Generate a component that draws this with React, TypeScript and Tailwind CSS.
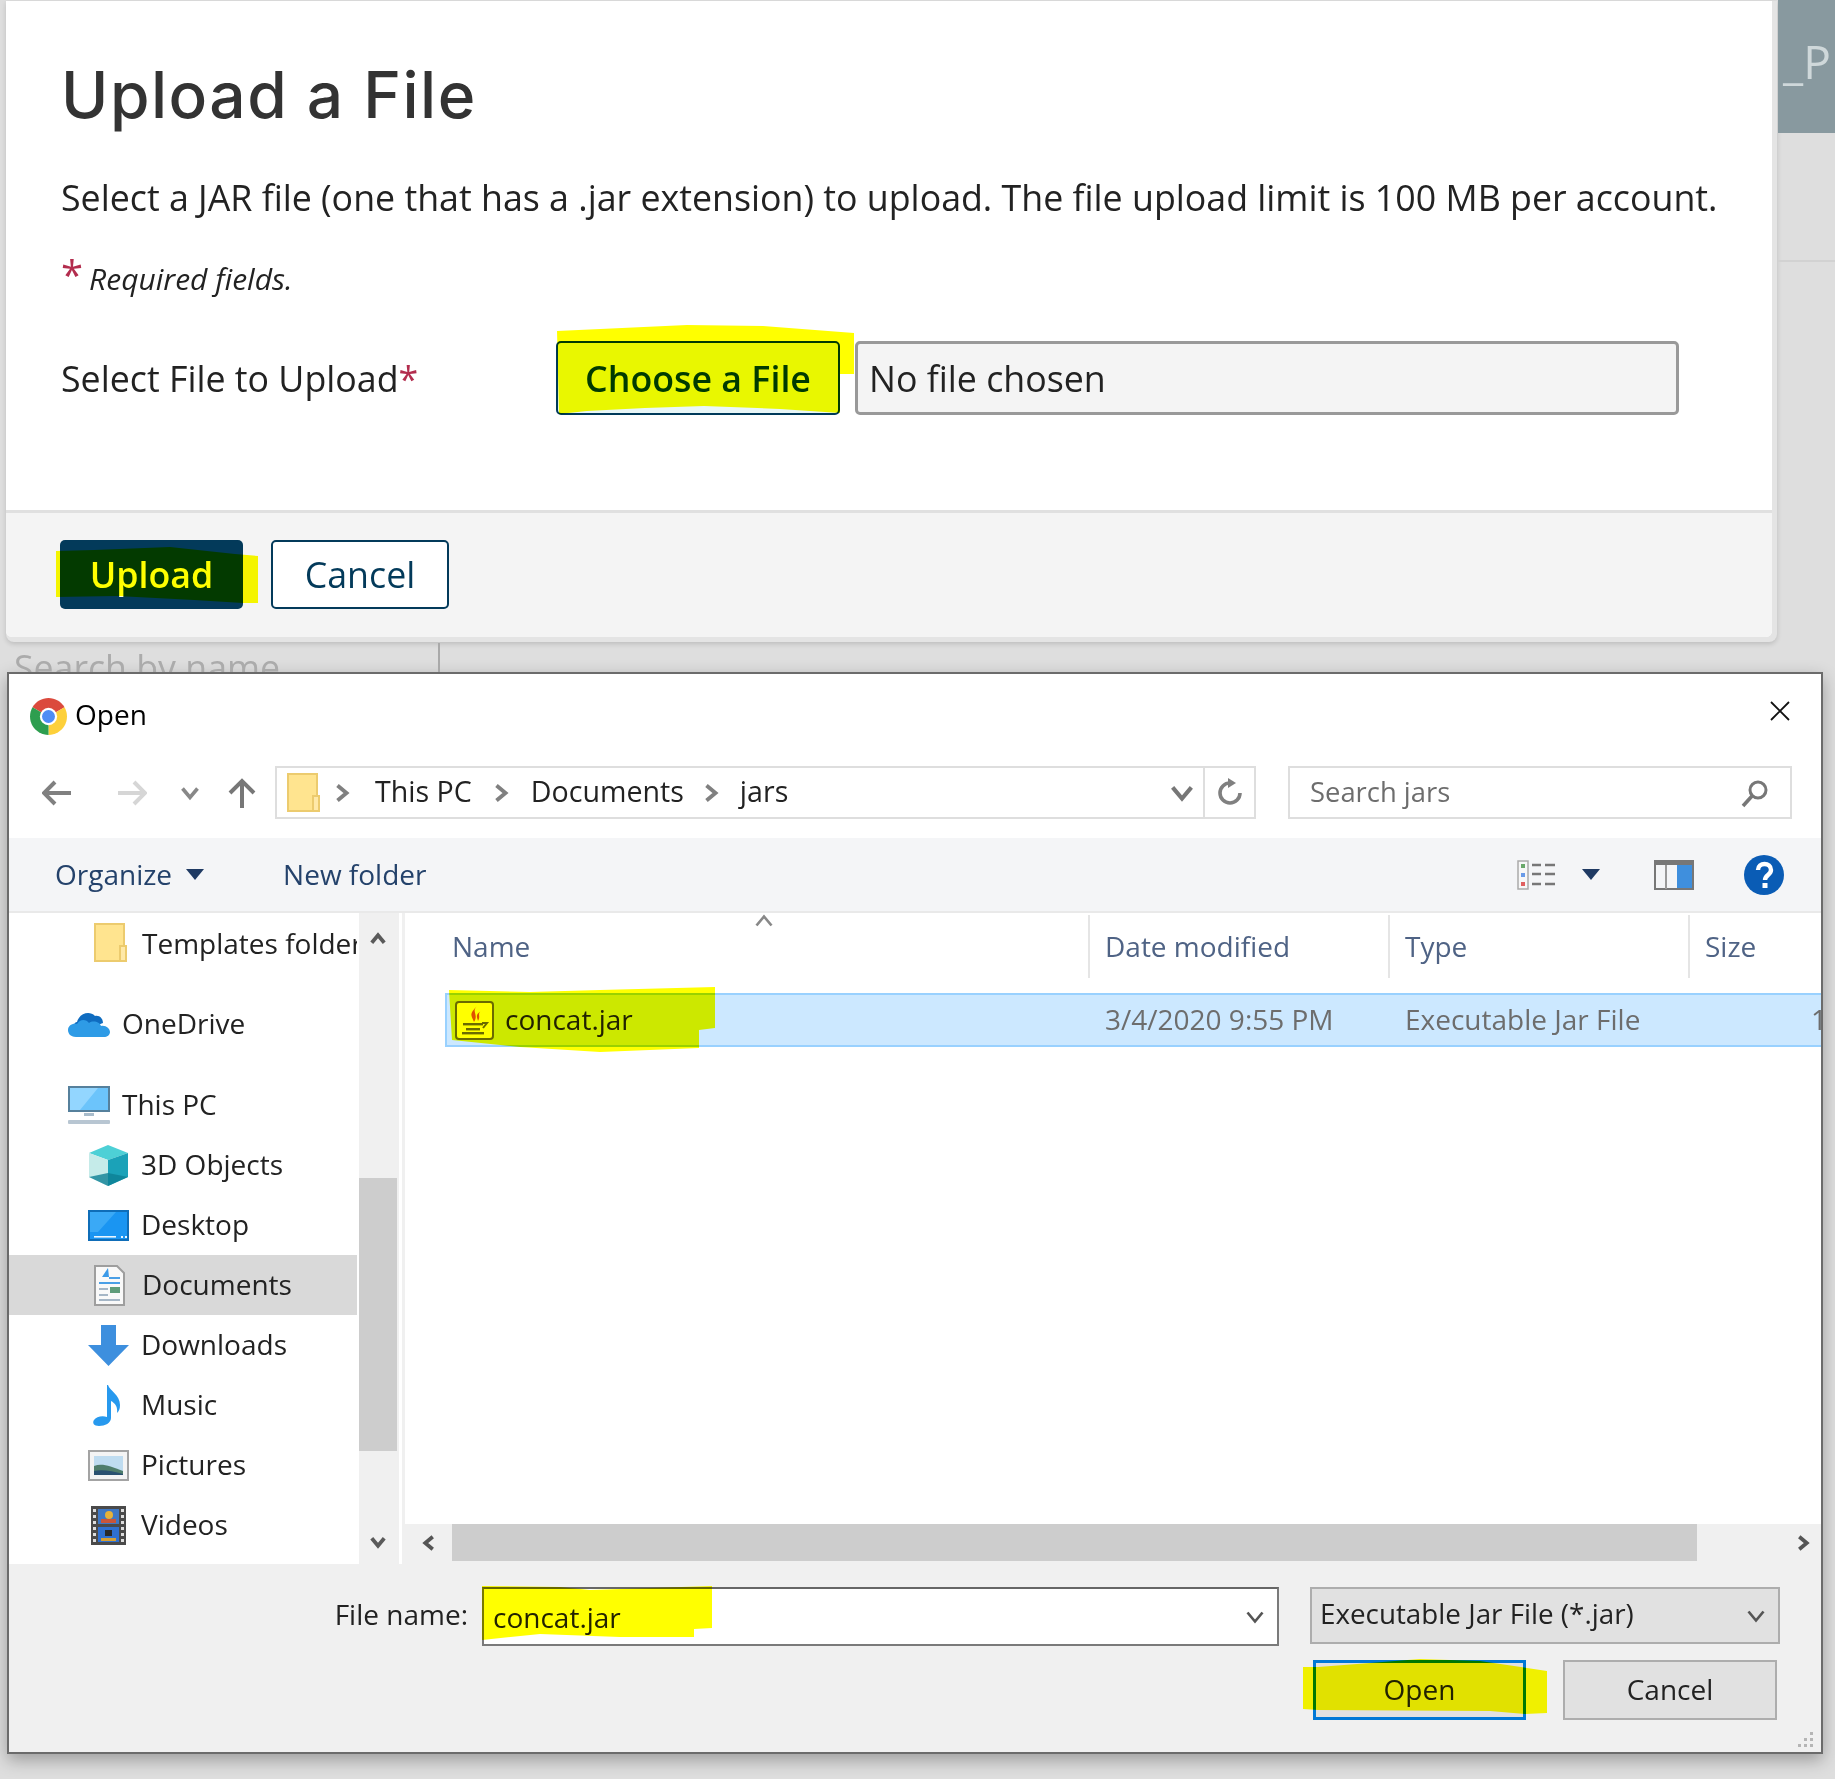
import React from 'react';

const openSans = "font-['Open_Sans',sans-serif]";

function Chev({ dir, size = 16, color = '#555', sw = 2.4 }: { dir: 'up' | 'down' | 'left' | 'right'; size?: number; color?: string; sw?: number }) {
    const pts = { up: '3,11 8,5 13,11', down: '3,5 8,11 13,5', left: '11,3 5,8 11,13', right: '5,3 11,8 5,13' }[dir];
    return (
        <svg width={size} height={size} viewBox="0 0 16 16" className="shrink-0">
            <polyline points={pts} fill="none" stroke={color} strokeWidth={sw} />
        </svg>
    );
}

function Tri({ color = '#1f3a63' }: { color?: string }) {
    return (
        <svg width="18" height="11" viewBox="0 0 18 11" className="shrink-0">
            <polygon points="0,0 18,0 9,11" fill={color} />
        </svg>
    );
}

function FolderIcon() {
    return (
        <svg width="33" height="40" viewBox="0 0 33 40" className="shrink-0">
            <rect x="1" y="1" width="29" height="37" fill="#ffe48f" stroke="#eccb6e" strokeWidth="2" />
            <rect x="26" y="23" width="6" height="15" fill="#ffe9a8" stroke="#eccb6e" strokeWidth="2" />
        </svg>
    );
}

function ChromeIcon() {
    return (
        <svg width="37" height="37" viewBox="0 0 24 24" className="shrink-0">
            <path d="M12 12L22.39 6A12 12 0 0 0 1.61 6Z" fill="#db4a3d" />
            <path d="M12 12L12 24A12 12 0 0 0 22.39 6Z" fill="#fdd03a" />
            <path d="M12 12L1.61 6A12 12 0 0 0 12 24Z" fill="#2d9e4f" />
            <circle cx="12" cy="12" r="5.6" fill="#fff" />
            <circle cx="12" cy="12" r="4.2" fill="#4f8df5" />
        </svg>
    );
}

function OneDriveIcon() {
    return (
        <svg width="42" height="27" viewBox="0 0 42 27" className="shrink-0">
            <path d="M9 12C11 4 21 0 27 6C31 5 35 8 35 13L16 20L6 17C5 15 7 12 9 12Z" fill="#0f6cc0" />
            <path d="M8 27C2 27 0 23 0 20C0 16 4 13 9 14C12 9 18 9 21 13C25 10 32 12 33 16C38 15 42 19 42 22C42 25 39 27 36 27Z" fill="#2e9be6" />
        </svg>
    );
}

function MonitorIcon() {
    return (
        <svg width="42" height="39" viewBox="0 0 42 39" className="shrink-0">
            <rect x="1" y="1" width="40" height="24" fill="#6cc4fb" stroke="#56809c" strokeWidth="2" />
            <polygon points="2,2 30,2 12,24 2,24" fill="#93d6ff" />
            <rect x="16" y="27" width="10" height="3" fill="#a9bccb" />
            <rect x="0" y="34" width="42" height="4" rx="1" fill="#b8c6d2" />
        </svg>
    );
}

function CubeIcon() {
    return (
        <svg width="41" height="41" viewBox="0 0 41 41" className="shrink-0">
            <polygon points="20,0 40,8 20,15 1,8" fill="#4dd0d6" />
            <polygon points="1,8 20,15 20,41 1,32" fill="#c5ebe9" />
            <polygon points="40,8 20,15 20,41 40,32" fill="#1ba2b8" />
            <polygon points="20,28 40,32 20,41 1,32" fill="#0d7f93" opacity="0.8" />
        </svg>
    );
}

function DesktopIcon() {
    return (
        <svg width="41" height="31" viewBox="0 0 41 31" className="shrink-0">
            <rect x="1" y="1" width="39" height="29" fill="#1a95f2" stroke="#0f6db8" strokeWidth="2" />
            <polygon points="2,2 28,2 10,22 2,22" fill="#3aa9f6" />
            <rect x="6" y="26" width="22" height="1.6" fill="#e8f5ff" />
            <rect x="33" y="26" width="2" height="2" fill="#e8f5ff" />
            <rect x="37" y="26" width="2" height="2" fill="#e8f5ff" />
        </svg>
    );
}

function DocumentIcon() {
    return (
        <svg width="31" height="41" viewBox="0 0 31 41" className="shrink-0">
            <path d="M1 1H23L30 8V40H1Z" fill="#f9f9f9" stroke="#9e9e9e" strokeWidth="2" />
            <path d="M8 12L14 3L15 12Z" fill="#3c9ae8" />
            <rect x="15" y="12" width="11" height="2" fill="#4a9fe6" />
            <rect x="5" y="17" width="21" height="2" fill="#4a9fe6" />
            <rect x="5" y="23" width="9" height="2" fill="#a5b6c6" />
            <rect x="16" y="22" width="10" height="6" fill="#5f9c7a" />
            <rect x="5" y="29" width="9" height="2" fill="#a5b6c6" />
            <rect x="5" y="34" width="21" height="2" fill="#a5b6c6" />
        </svg>
    );
}

function DownloadIcon() {
    return (
        <svg width="41" height="41" viewBox="0 0 41 41" className="shrink-0">
            <polygon points="13,0 28,0 28,20 41,20 20.5,41 0,20 13,20" fill="#3d8fde" />
        </svg>
    );
}

function MusicIcon() {
    return (
        <svg width="30" height="41" viewBox="0 0 30 41" className="shrink-0">
            <path d="M16 0C18 6 28 10 28 20C28 24 27 26 25 28C26 22 23 18 19 16V33C19 38 13 41 7 41C2 41 0 38 2 35C4 32 10 30 15 32V0Z" fill="#2799ee" />
        </svg>
    );
}

function PicturesIcon() {
    return (
        <svg width="41" height="31" viewBox="0 0 41 31" className="shrink-0">
            <rect x="1" y="1" width="39" height="29" fill="#f4f4f4" stroke="#a3a3a3" strokeWidth="2" />
            <rect x="6" y="6" width="29" height="19" fill="#bfdcf0" />
            <path d="M6 16C14 13 22 16 35 21V25H6Z" fill="#4f7d6b" />
            <path d="M6 21C14 19 24 21 35 24V25H6Z" fill="#2a5170" />
        </svg>
    );
}

function VideosIcon() {
    return (
        <svg width="35" height="39" viewBox="0 0 35 39" className="shrink-0">
            <rect x="0" y="0" width="35" height="39" fill="#4a4a4a" />
            <rect x="7" y="3" width="21" height="15" fill="#3f78c4" />
            <rect x="7" y="21" width="21" height="15" fill="#2f70d0" />
            <circle cx="18" cy="9" r="4" fill="#e6b23a" />
            <rect x="10" y="13" width="15" height="4" fill="#c8553a" />
            <rect x="14" y="24" width="7" height="6" fill="#2a2a2a" />
            <rect x="10" y="32" width="15" height="3" fill="#d6a035" />
            {[3, 9, 15, 21, 27, 33].map(y => (
                <g key={y}>
                    <rect x="2" y={y} width="3" height="3" fill="#ddd" />
                    <rect x="30" y={y} width="3" height="3" fill="#ddd" />
                </g>
            ))}
        </svg>
    );
}

function JarIcon() {
    return (
        <svg width="39" height="39" viewBox="0 0 39 39" className="shrink-0">
            <rect x="1" y="1" width="37" height="37" rx="3" fill="#fff" stroke="#6a6a40" strokeWidth="2" />
            <path d="M22 5C16 11 24 13 19 21C17 15 13 14 22 5Z" fill="#e0502a" />
            <path d="M26 10C22 13 26 15 23 20C22 16 20 14 26 10Z" fill="#e0502a" />
            <rect x="8" y="22" width="20" height="2.4" fill="#6a6a40" />
            <rect x="11" y="27" width="14" height="2.4" fill="#6a6a40" />
            <rect x="7" y="31" width="22" height="2.4" fill="#6a6a40" />
            <path d="M27 22H32L28 27" fill="none" stroke="#6a6a40" strokeWidth="2" />
        </svg>
    );
}

const navItems = [
    { label: 'This PC', icon: <MonitorIcon />, pl: 'pl-[59px]', gap: 'gap-[12px]' },
    { label: '3D Objects', icon: <CubeIcon />, pl: 'pl-[79px]', gap: 'gap-[12px]' },
    { label: 'Desktop', icon: <DesktopIcon />, pl: 'pl-[79px]', gap: 'gap-[12px]' },
    { label: 'Documents', icon: <DocumentIcon />, pl: 'pl-[85px]', gap: 'gap-[17px]', active: true },
    { label: 'Downloads', icon: <DownloadIcon />, pl: 'pl-[79px]', gap: 'gap-[12px]' },
    { label: 'Music', icon: <MusicIcon />, pl: 'pl-[83px]', gap: 'gap-[19px]' },
    { label: 'Pictures', icon: <PicturesIcon />, pl: 'pl-[79px]', gap: 'gap-[12px]' },
    { label: 'Videos', icon: <VideosIcon />, pl: 'pl-[82px]', gap: 'gap-[15px]' },
];

function UploadModal() {
    return (
        <div className="ml-[6px] mt-px h-[641px] w-[1771px] shrink-0 rounded-b-lg bg-[#e4e4e4] pr-[5px] pb-[5px] shadow-[0_2px_5px_rgba(0,0,0,0.15)]">
            <div className="flex h-full flex-col overflow-hidden rounded-b-md bg-white">
                <div className="flex-1 pl-[55px] pt-[54px]">
                    <h1 className="font-['Inter',sans-serif] text-[64px] font-medium leading-[80px] tracking-[1.5px] text-[#333]">Upload a File</h1>
                    <p className="mt-[37px] whitespace-nowrap text-[35.75px] leading-[50px] text-[#222]">
                        Select a JAR file (one that has a .jar extension) to upload. The file upload limit is 100 MB per account.
                    </p>
                    <p className="mt-[28px] flex h-[50px] items-baseline text-[#222]">
                        <span className="mr-[6px] text-[40px] leading-[50px] text-[#b32d4e]">*</span>
                        <em className="text-[30px] leading-[50px]">Required fields.</em>
                    </p>
                    <div className="mt-[41px] flex items-center">
                        <div className="w-[495px] text-[35.75px] leading-[50px] text-[#222]">
                            Select File to Upload<span className="text-[#b32d4e]">*</span>
                        </div>
                        <button className="h-[74px] w-[284px] rounded-[5px] border-2 border-[#003a5a] bg-[#e9f7f8] pt-[2px] text-[35.75px] font-semibold text-[#003a5a]">Choose a File</button>
                        <div className="ml-[15px] flex h-[74px] w-[824px] items-center rounded-[5px] border-[3px] border-[#999] bg-[#f4f4f4] pl-[11px] pt-[2px] text-[35.75px] text-[#222]">No file chosen</div>
                    </div>
                </div>
                <div className="flex h-[127px] shrink-0 gap-[28px] border-t-[3px] border-[#e0e0e0] bg-[#f4f4f4] pl-[54px] pt-[27px]">
                    <button className="h-[69px] w-[183px] rounded-[5px] bg-[#033a5a] text-[35.75px] font-semibold text-white">Upload</button>
                    <button className="h-[69px] w-[178px] rounded-[5px] border-2 border-[#033a5a] bg-white text-[35.75px] font-medium text-[#033a5a]">Cancel</button>
                </div>
            </div>
        </div>
    );
}

function OpenDialog() {
    return (
        <div className="ml-[7px] h-[1082px] w-[1816px] shrink-0 flex flex-col border-2 border-[#6b6b6b] bg-white text-[28px] text-[#222] shadow-[0_6px_16px_rgba(0,0,0,0.3)]">
            {/* title bar */}
            <div className="flex h-[92px] shrink-0 items-start justify-between pl-[21px] pr-[31px] pt-[19px]">
                <div className="flex items-center gap-[8px] text-black">
                    <ChromeIcon />
                    <span className="pb-[5px]">Open</span>
                </div>
                <svg width="20" height="20" viewBox="0 0 20 20" className="mt-[8px]">
                    <path d="M1 1L19 19M19 1L1 19" stroke="#111" strokeWidth="1.8" />
                </svg>
            </div>

            {/* nav row */}
            <div className="flex h-[53px] shrink-0 items-center pl-[33px]">
                <svg width="30" height="26" viewBox="0 0 30 26" className="shrink-0">
                    <path d="M29 13H3M13 2L2 13L13 24" fill="none" stroke="#808080" strokeWidth="4" />
                </svg>
                <svg width="30" height="26" viewBox="0 0 30 26" className="ml-[45px] shrink-0">
                    <path d="M1 13H27M17 2L28 13L17 24" fill="none" stroke="#d6d6d6" strokeWidth="4" />
                </svg>
                <div className="ml-[31px]"><Chev dir="down" size={24} color="#888" sw={2.4} /></div>
                <svg width="30" height="30" viewBox="0 0 30 30" className="ml-[25px] shrink-0">
                    <path d="M15 30V3M3 15L15 3L27 15" fill="none" stroke="#777" strokeWidth="4" />
                </svg>
                <div className="ml-[18px] flex h-[53px] w-[981px] items-center border-2 border-[#dedede] pl-[10px]">
                    <FolderIcon />
                    <div className="ml-[10px]"><Chev dir="right" size={24} color="#808080" sw={2.6} /></div>
                    <span className="ml-[21px] pb-[2px] text-[28.6px]">This PC</span>
                    <div className="ml-[17px]"><Chev dir="right" size={24} color="#808080" sw={2.6} /></div>
                    <span className="ml-[18px] pb-[2px] text-[28.6px]">Documents</span>
                    <div className="ml-[15px]"><Chev dir="right" size={24} color="#808080" sw={2.6} /></div>
                    <span className="ml-[17px] pb-[2px] text-[28.6px]">jars</span>
                    <div className="ml-auto mr-[6px]"><Chev dir="down" size={30} color="#777" sw={2.2} /></div>
                    <div className="flex h-full w-[51px] items-center justify-center border-l-2 border-[#dedede]">
                        <svg width="26" height="30" viewBox="0 0 26 30">
                            <path d="M15 5H13A10 10 0 1 0 23 15" fill="none" stroke="#808080" strokeWidth="3.6" />
                            <path d="M11 0L19 5L11 10Z" fill="#808080" />
                        </svg>
                    </div>
                </div>
                <div className="ml-[32px] flex h-[53px] w-[504px] items-center justify-between border-2 border-[#dedede] pl-[20px] pr-[20px] text-[#6d6d6d]">
                    <span className="pb-[2px] text-[27.4px]">Search jars</span>
                    <svg width="30" height="30" viewBox="0 0 30 30">
                        <circle cx="18" cy="12" r="8" fill="none" stroke="#777" strokeWidth="3" />
                        <path d="M12 18L3 28" stroke="#777" strokeWidth="3.6" />
                    </svg>
                </div>
            </div>

            {/* toolbar */}
            <div className="mt-[19px] flex h-[75px] shrink-0 items-center border-b-2 border-[#e9e9e9] bg-[#f4f5f7] pl-[46px] text-[#24426b]">
                <span className="pb-[2px]">Organize</span>
                <div className="ml-[14px]"><Tri /></div>
                <span className="ml-[79px] pb-[2px]">New folder</span>
                <svg width="40" height="30" viewBox="0 0 40 30" className="ml-auto shrink-0">
                    <rect x="1" y="1" width="10" height="28" fill="#f7f7f7" stroke="#aaa" strokeWidth="1.5" />
                    <rect x="4" y="4" width="4" height="4" fill="#6aa86a" />
                    <rect x="4" y="13" width="4" height="4" fill="#6a9be8" />
                    <rect x="4" y="22" width="4" height="4" fill="#e06060" />
                    {[5, 14, 24].map(y => (
                        <path key={y} d={`M15 ${y}H24M28 ${y}H38`} stroke="#777" strokeWidth="2.4" />
                    ))}
                </svg>
                <div className="ml-[25px]"><Tri /></div>
                <svg width="40" height="30" viewBox="0 0 40 30" className="ml-[54px] shrink-0">
                    <rect x="1" y="1" width="38" height="28" fill="#f4f5f7" stroke="#777" strokeWidth="2" />
                    <rect x="1" y="1" width="38" height="4" fill="#777" />
                    <rect x="11" y="5" width="2" height="24" fill="#999" />
                    <rect x="23" y="5" width="15" height="23" fill="#3f8fdd" />
                </svg>
                <svg width="40" height="40" viewBox="0 0 40 40" className="ml-[50px] mr-[37px] shrink-0">
                    <circle cx="20" cy="20" r="20" fill="#0a5cb5" />
                    <path d="M14 15C14 7 27 7 27 15C27 20 21 20 21 25" fill="none" stroke="#fff" strokeWidth="4.4" />
                    <rect x="18.5" y="28" width="5" height="5" fill="#fff" />
                </svg>
            </div>

            {/* body */}
            <div className="flex min-h-0 flex-1">
                <div className="w-[348px] shrink-0 overflow-hidden">
                    <div className="flex h-[60px] items-center gap-[15px] whitespace-nowrap pl-[85px]">
                        <FolderIcon />
                        <span>Templates folder</span>
                    </div>
                    <div className="mt-[20px] flex h-[60px] items-center gap-[12px] pl-[59px]">
                        <OneDriveIcon />
                        <span>OneDrive</span>
                    </div>
                    <div className="mt-[22px]">
                        {navItems.map(item => (
                            <div
                                key={item.label}
                                className={`flex h-[60px] items-center ${item.pl} ${item.gap} ${item.active ? 'bg-[#d9d9d9]' : ''}`}
                            >
                                {item.icon}
                                <span className="pb-[3px]">{item.label}</span>
                            </div>
                        ))}
                    </div>
                </div>
                <div className="ml-[2px] flex w-[40px] shrink-0 flex-col bg-[#f0f0f0]">
                    <div className="flex h-[265px] justify-center pr-[2px] pt-[16px]"><Chev dir="up" size={20} color="#5a5a5a" sw={3} /></div>
                    <div className="h-[273px] w-[38px] bg-[#cdcdcd]" />
                    <div className="flex flex-1 items-end justify-center pb-[12px] pr-[2px]"><Chev dir="down" size={20} color="#5a5a5a" sw={3} /></div>
                </div>
                <div className="ml-[3px] w-[3px] shrink-0 bg-[#f0f0f0]" />

                <div className="flex min-w-0 flex-1 flex-col overflow-hidden">
                    <div className="relative flex h-[67px] shrink-0 text-[#4f6385]">
                        <div className="flex w-[683px] items-center pb-[2px] pl-[47px]">Name</div>
                        <div className="my-[2px] flex w-[300px] items-center border-l-2 border-[#e5e5e5] pb-[2px] pl-[15px]">Date modified</div>
                        <div className="my-[2px] flex w-[300px] items-center border-l-2 border-[#e5e5e5] pb-[2px] pl-[15px]">Type</div>
                        <div className="my-[2px] flex flex-1 items-center border-l-2 border-[#e5e5e5] pb-[2px] pl-[15px]">Size</div>
                        <div className="absolute left-[347px] top-[-4px]"><Chev dir="up" size={24} color="#888" sw={1.8} /></div>
                    </div>
                    <div className="ml-[40px] mt-[13px] flex h-[54px] shrink-0 items-center overflow-hidden border-y-2 border-l-2 border-[#99d1ff] bg-[#cce8ff] text-[#6d6d6d]">
                        <div className="flex w-[658px] shrink-0 items-center gap-[11px] pl-[8px] text-[#222]">
                            <JarIcon />
                            <span className="pb-[3px]">concat.jar</span>
                        </div>
                        <div className="w-[300px] shrink-0 pb-[3px]">3/4/2020 9:55 PM</div>
                        <div className="w-[406px] shrink-0 pb-[3px]">Executable Jar File</div>
                        <div className="shrink-0 pb-[3px]">1</div>
                    </div>
                    <div className="flex-1" />
                    <div className="flex h-[40px] shrink-0 items-start bg-[#f0f0f0]">
                        <div className="flex h-[37px] w-[47px] items-center justify-center"><Chev dir="left" size={20} color="#555" sw={3} /></div>
                        <div className="h-[37px] w-[1245px] bg-[#cdcdcd]" />
                        <div className="flex h-[37px] flex-1 items-center justify-end pr-[8px]"><Chev dir="right" size={20} color="#555" sw={3} /></div>
                    </div>
                </div>
            </div>

            {/* footer */}
            <div className="relative h-[188px] shrink-0 bg-[#f0f0f0] pt-[23px]">
                <div className="flex items-start">
                    <div className="flex h-[57px] w-[459px] items-center justify-end pb-[3px]">File name:</div>
                    <div className="ml-[14px] flex h-[59px] w-[797px] items-center justify-between border-2 border-[#7a7a7a] border-t-[#666] bg-white pl-[9px] pr-[10px]">
                        <span>concat.jar</span>
                        <Chev dir="down" size={24} color="#555" sw={1.8} />
                    </div>
                    <div className="ml-[31px] flex h-[57px] w-[470px] items-center justify-between border-2 border-[#adadad] bg-[#e1e1e1] pl-[8px] pr-[10px]">
                        <span className="pb-[3px] text-[27.8px]">Executable Jar File (*.jar)</span>
                        <Chev dir="down" size={24} color="#555" sw={1.8} />
                    </div>
                </div>
                <div className="mt-[14px] flex justify-end pr-[44px]">
                    <button className="h-[60px] w-[213px] border-[3px] border-[#0078d7] bg-[#e1e1e1] pb-[2px]">Open</button>
                    <button className="ml-[37px] h-[60px] w-[214px] border-2 border-[#adadad] bg-[#e1e1e1] pb-[2px]">Cancel</button>
                </div>
                <svg width="20" height="20" viewBox="0 0 20 20" className="absolute bottom-[2px] right-[3px]">
                    {[[12, 2], [12, 8], [6, 8], [12, 14], [6, 14], [0, 14]].map(([x, y]) => (
                        <rect key={`${x}-${y}`} x={x} y={y} width="3" height="3" fill="#b5b5b5" />
                    ))}
                </svg>
            </div>
        </div>
    );
}

export default function App() {
    return (
        <div className={`relative h-[1779px] w-[1835px] overflow-hidden bg-[#dedede] ${openSans}`}>
            <div className="flex h-[643px]">
                <UploadModal />
                <div className="ml-px flex-1 overflow-hidden">
                    <div className="h-[133px] overflow-hidden whitespace-nowrap bg-[#88999f] pl-[5px] pt-[36px] text-[46px] leading-[50px] text-[#cfd8da]">_P</div>
                    <div className="mt-[127px] h-[2px] bg-[#d2d2d2]" />
                </div>
            </div>
            <div className="flex h-[29px] overflow-hidden">
                <div className="h-full w-[440px] whitespace-nowrap border-r-2 border-[#a9a9a9] pl-[14px] pt-[4px] text-[35.7px] leading-[40px] text-[#ababab]">Search by name</div>
            </div>
            <OpenDialog />

            {/* marker strokes drawn over the screenshot */}
            <svg width="1835" height="1779" viewBox="0 0 1835 1779" className="pointer-events-none absolute left-0 top-0 mix-blend-multiply">
                <polygon fill="#ffff00" points="557,331 622,328 687,325 763,326 854,333 854,374 840,374 840,413 780,409 704,406 645,408 587,411 559,414" />
                <polygon fill="#ffff00" points="56,551 94,550 170,547 235,554 258,556 258,603 243,603 194,600 117,596 56,597" />
                <polygon fill="#ffff00" points="449,990 530,992 600,990 715,987 715,1028 699,1030 699,1048 600,1052 520,1047 452,1040" />
                <polygon fill="#ffff00" points="482,1586 560,1587 590,1590 712,1586 712,1628 694,1629 694,1637 620,1637 540,1634 482,1640" />
                <polygon fill="#ffff00" points="1303,1667 1318,1667 1370,1663 1420,1659 1480,1661 1527,1668 1547,1671 1547,1713 1525,1714 1490,1711 1318,1710 1303,1709" />
            </svg>
        </div>
    );
}
